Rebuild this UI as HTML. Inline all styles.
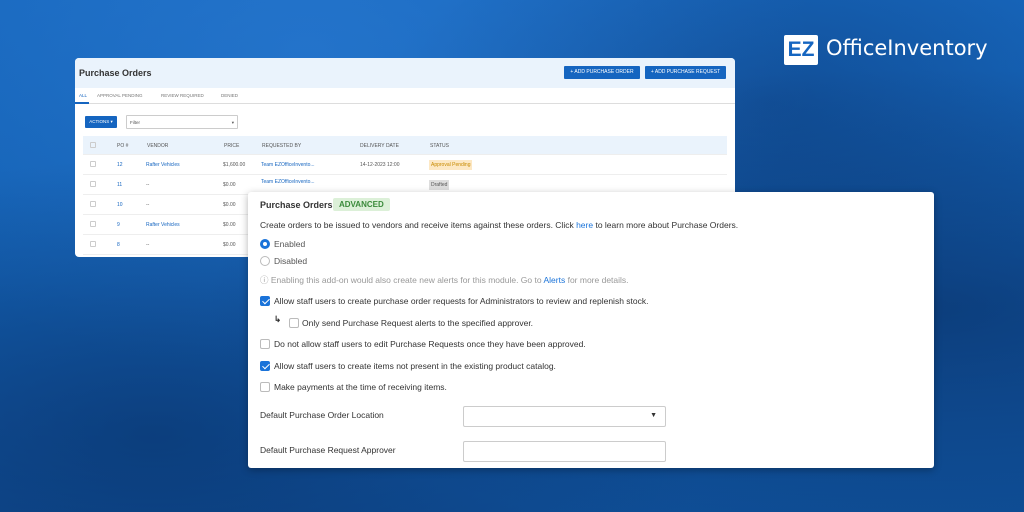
<!DOCTYPE html>
<html><head><style>
*{margin:0;padding:0;box-sizing:border-box}
body{width:1024px;height:512px;overflow:hidden;font-family:"Liberation Sans",sans-serif;position:relative;
background:linear-gradient(180deg,#1767bd 0%,#1360b2 55%,#0f4f98 100%);}
.bgd{position:absolute;inset:0;background:radial-gradient(ellipse at 90% 60%,rgba(8,40,90,.6),transparent 55%),radial-gradient(ellipse at 15% 85%,rgba(8,40,90,.5),transparent 45%),radial-gradient(ellipse at 30% 10%,rgba(60,140,230,.35),transparent 50%),radial-gradient(ellipse at 75% 20%,rgba(10,45,100,.4),transparent 35%)}
.card1{position:absolute;left:75px;top:58px;width:660px;height:199px;background:#fff;border-radius:4px;overflow:hidden;font-size:5px;color:#555}
.h1{height:30px;background:#eaf3fc;position:relative}
.h1 b{position:absolute;left:4px;top:10px;font-size:9px;color:#333}
.btn{position:absolute;top:8px;height:13px;background:#1565c0;color:#fff;font-size:5px;line-height:13px;text-align:center;border-radius:1px}
.tabs{height:16px;border-bottom:1px solid #ddd;position:relative}
.tabs span{position:absolute;top:5px;font-size:4.5px;color:#777}
.row{position:absolute;left:8px;right:8px;height:20px;border-bottom:1px solid #eee}
.row span{position:absolute;top:7px;font-size:5px}
.row i{position:absolute;left:7px;top:6px;width:6px;height:6px;border:1px solid #ccc;border-radius:1px}
.card2{position:absolute;left:248px;top:192px;width:686px;height:276px;background:#fff;border-radius:3px;color:#333;font-size:8.5px;box-shadow:0 2px 8px rgba(0,0,0,.3)}
.t{position:absolute;white-space:nowrap}
.cb{position:absolute;width:10px;height:10px;border:1px solid #bbb;border-radius:2px;background:#fff}
.cb.on{background:#1a73d9;border-color:#1a73d9}
.cb.on:after{content:"";position:absolute;left:3px;top:0px;width:3px;height:6px;border:solid #fff;border-width:0 1.5px 1.5px 0;transform:rotate(45deg)}
.rd{position:absolute;width:10px;height:10px;border-radius:50%;border:1px solid #bbb}
.inp{position:absolute;left:215px;width:203px;height:21px;border:1px solid #ccc;border-radius:2px}
</style></head><body>
<div class="bgd"></div>
<div style="position:absolute;left:784px;top:35px;width:34px;height:30px;background:#fff;border-radius:2px;color:#1565c0;font-weight:bold;font-size:21px;text-align:center;line-height:30px">EZ</div>
<div class="t" style="left:826px;top:36px;color:#fff;font-size:21px;font-family:'DejaVu Sans',sans-serif">OfficeInventory</div>

<div class="card1">
<div class="h1"><b>Purchase Orders</b>
<div class="btn" style="left:489px;width:76px">+ ADD PURCHASE ORDER</div>
<div class="btn" style="left:570px;width:81px">+ ADD PURCHASE REQUEST</div></div>
<div class="tabs"><span style="left:4px;color:#1565c0">ALL</span><span style="left:22px">APPROVAL PENDING</span><span style="left:86px">REVIEW REQUIRED</span><span style="left:146px">DENIED</span>
<div style="position:absolute;left:0;bottom:-1px;width:14px;height:2px;background:#1565c0"></div></div>
<div style="position:absolute;left:10px;top:58px;width:32px;height:12px;background:#1565c0;color:#fff;font-size:4.5px;line-height:12px;text-align:center;border-radius:1px">ACTIONS ▾</div>
<div style="position:absolute;left:51px;top:57px;width:112px;height:14px;border:1px solid #ccc;border-radius:1px;padding:4px 3px;font-size:4.5px">Filter<span style="float:right">▾</span></div>
<div class="row" style="top:78px;height:19px;background:#eaf3fc"><i></i><span style="left:34px">PO #</span><span style="left:64px">VENDOR</span><span style="left:141px">PRICE</span><span style="left:179px">REQUESTED BY</span><span style="left:277px">DELIVERY DATE</span><span style="left:347px">STATUS</span></div>
<div class="row" style="top:97px"><i></i><span style="left:34px;color:#1565c0">12</span><span style="left:63px;color:#1565c0">Rafter Vehicles</span><span style="left:140px">$1,600.00</span><span style="left:178px;color:#1565c0">Team EZOfficeInvento...</span><span style="left:277px">14-12-2023 12:00</span><span style="left:346px;top:5px;background:#fde8c4;color:#c78a00;padding:2px 2px">Approval Pending</span></div>
<div class="row" style="top:117px"><i></i><span style="left:34px;color:#1565c0">11</span><span style="left:63px">--</span><span style="left:140px">$0.00</span><span style="left:178px;top:4px;color:#1565c0">Team EZOfficeInvento...</span><span style="left:346px;top:5px;background:#ddd;padding:2px 2px">Drafted</span></div>
<div class="row" style="top:137px"><i></i><span style="left:34px;color:#1565c0">10</span><span style="left:63px">--</span><span style="left:140px">$0.00</span></div>
<div class="row" style="top:157px"><i></i><span style="left:34px;color:#1565c0">9</span><span style="left:63px;color:#1565c0">Rafter Vehicles</span><span style="left:140px">$0.00</span></div>
<div class="row" style="top:177px"><i></i><span style="left:34px;color:#1565c0">8</span><span style="left:63px">--</span><span style="left:140px">$0.00</span></div>
</div>

<div class="card2">
<div class="t" style="left:12px;top:8px;font-weight:bold;font-size:9px">Purchase Orders</div>
<div class="t" style="left:85px;top:6px;background:#dcf0d8;color:#3a8a3a;font-weight:bold;font-size:8px;padding:2px 6px;border-radius:2px">ADVANCED</div>
<div class="t" style="left:12px;top:28px">Create orders to be issued to vendors and receive items against these orders. Click <span style="color:#1a73d9">here</span> to learn more about Purchase Orders.</div>
<div class="rd" style="left:12px;top:47px;border:3px solid #1a73d9"></div><div class="t" style="left:26px;top:47px;color:#555">Enabled</div>
<div class="rd" style="left:12px;top:64px"></div><div class="t" style="left:26px;top:64px;color:#555">Disabled</div>
<div class="t" style="left:12px;top:82px;color:#999">ⓘ Enabling this add-on would also create new alerts for this module. Go to <span style="color:#1a73d9">Alerts</span> for more details.</div>
<div class="cb on" style="left:12px;top:104px"></div><div class="t" style="left:26px;top:104px">Allow staff users to create purchase order requests for Administrators to review and replenish stock.</div>
<div class="t" style="left:26px;top:122px;font-weight:bold">↳</div>
<div class="cb" style="left:41px;top:126px"></div><div class="t" style="left:54px;top:126px">Only send Purchase Request alerts to the specified approver.</div>
<div class="cb" style="left:12px;top:147px"></div><div class="t" style="left:26px;top:147px">Do not allow staff users to edit Purchase Requests once they have been approved.</div>
<div class="cb on" style="left:12px;top:169px"></div><div class="t" style="left:26px;top:169px">Allow staff users to create items not present in the existing product catalog.</div>
<div class="cb" style="left:12px;top:190px"></div><div class="t" style="left:26px;top:190px">Make payments at the time of receiving items.</div>
<div class="t" style="left:12px;top:218px">Default Purchase Order Location</div>
<div class="inp" style="top:214px"><span style="position:absolute;right:8px;top:5px;font-size:7px">▼</span></div>
<div class="t" style="left:12px;top:253px">Default Purchase Request Approver</div>
<div class="inp" style="top:249px"></div>
</div>
</body></html>
